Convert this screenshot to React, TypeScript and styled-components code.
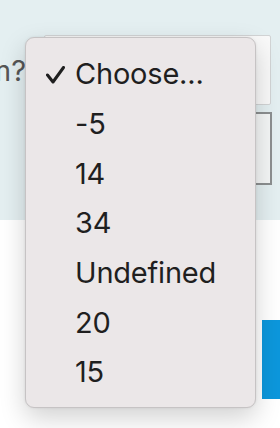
import styled, { createGlobalStyle } from 'styled-components';

const GlobalStyle = createGlobalStyle`
    html, body {
        margin: 0;
        padding: 0;
        background: #ffffff;
        overflow: hidden;
    }
    * {
        box-sizing: border-box;
    }
`;

const Page = styled.div`
    position: relative;
    width: 280px;
    height: 428px;
    overflow: hidden;
    font-family: Inter, 'Liberation Sans', sans-serif;
`;

const Band = styled.div`
    height: 220px;
    background: #e4eff1;
    display: grid;
    grid-template-columns: 44px 1fr;
    grid-template-rows: 70px 73px;
    row-gap: 7px;
    padding: 35px 9px 0 0;
`;

const Label = styled.div`
    display: flex;
    justify-content: flex-end;
    align-items: center;
    overflow: hidden;
    white-space: nowrap;
    padding-right: 18px;
    font-size: 29px;
    color: #565656;
`;

const SelectBox = styled.div`
    background: #f9f9f9;
    border: 1px solid #d2d4d5;
    border-radius: 2px;
`;

const InputBox = styled.div`
    grid-column: 2;
    background: #f4f6f6;
    border: 2px solid #8c8f90;
    margin-right: -1px;
`;

const Lower = styled.div`
    display: flex;
    justify-content: flex-end;
    padding-top: 100px;
`;

const SubmitButton = styled.div`
    width: 18px;
    height: 79px;
    background: #0d97dc;
`;

const Menu = styled.ul`
    position: absolute;
    left: 25px;
    top: 37px;
    width: 231px;
    height: 371px;
    margin: 0;
    padding: 11px 0;
    list-style: none;
    background: #ebe7e8;
    border: 1px solid #c6c3c4;
    border-radius: 9px;
    box-shadow: 0 10px 26px rgba(0, 0, 0, 0.18), 0 0 3px rgba(0, 0, 0, 0.08);
`;

const Item = styled.li`
    position: relative;
    display: flex;
    align-items: center;
    height: 49.7px;
    padding-left: 49px;
    font-size: 29px;
    color: #1f1f1f;
    letter-spacing: -0.2px;
`;

const Check = styled.svg`
    position: absolute;
    left: 20px;
    top: 50%;
    margin-top: -8px;
    width: 19px;
    height: 18px;
`;

const options = ['Choose...', '-5', '14', '34', 'Undefined', '20', '15'];

export default function App() {
    return (
        <Page>
            <GlobalStyle />
            <Band>
                <Label>What is the maximum?</Label>
                <SelectBox />
                <InputBox />
            </Band>
            <Lower>
                <SubmitButton />
            </Lower>
            <Menu>
                {options.map((opt, i) => (
                    <Item key={opt}>
                        {i === 0 && (
                            <Check viewBox="0 0 19 18">
                                <polyline
                                    points="1.5,9 7,16 17.5,1.5"
                                    fill="none"
                                    stroke="#1f1f1f"
                                    strokeWidth="3"
                                    strokeLinecap="round"
                                    strokeLinejoin="round"
                                />
                            </Check>
                        )}
                        {opt}
                    </Item>
                ))}
            </Menu>
        </Page>
    );
}
